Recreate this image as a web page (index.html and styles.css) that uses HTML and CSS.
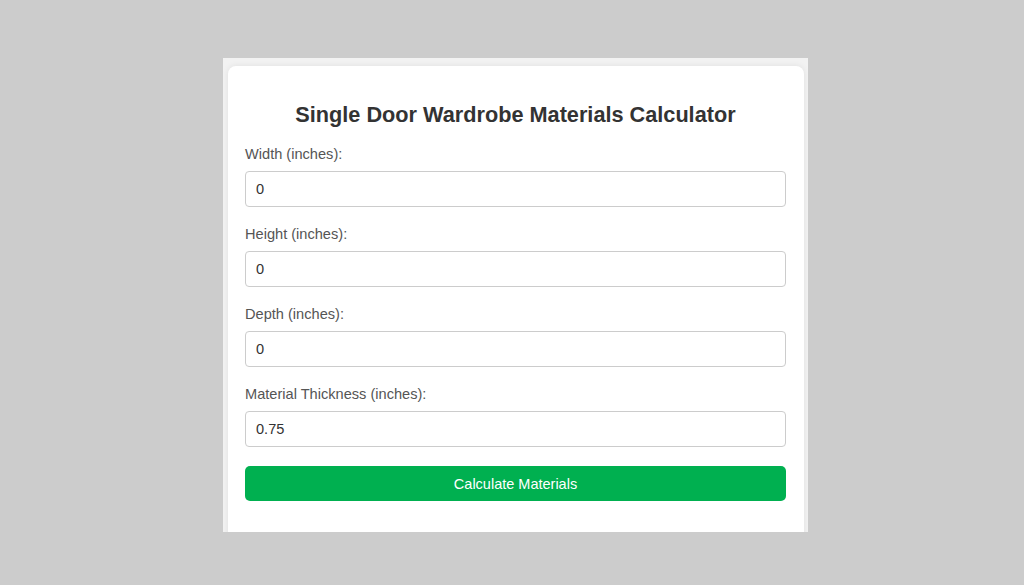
FILE: index.html
```html
<!DOCTYPE html>
<html lang="en">
<head>
    <meta charset="UTF-8">
    <meta name="viewport" content="width=device-width, initial-scale=1.0">
    <title>Single Door Wardrobe Materials Calculator</title>
    <link rel="stylesheet" href="styles.css">
</head>
<body>
    <div class="frame">
        <div class="calculator">
            <h2>Single Door Wardrobe Materials Calculator</h2>
            <div class="field">
                <label for="width">Width (inches):</label>
                <input type="number" id="width" value="0">
            </div>
            <div class="field">
                <label for="height">Height (inches):</label>
                <input type="number" id="height" value="0">
            </div>
            <div class="field">
                <label for="depth">Depth (inches):</label>
                <input type="number" id="depth" value="0">
            </div>
            <div class="field">
                <label for="thickness">Material Thickness (inches):</label>
                <input type="number" id="thickness" value="0.75">
            </div>
            <button class="calc-btn">Calculate Materials</button>
        </div>
    </div>
</body>
</html>
```

FILE: styles.css
```css
* {
    box-sizing: border-box;
}

html,
body {
    margin: 0;
    padding: 0;
}

body {
    background-color: #cccccc;
    font-family: "Liberation Sans", Arial, sans-serif;
}

.frame {
    width: 585px;
    height: 474px;
    margin: 58px 0 0 223px;
    padding: 8px 4px 0 5px;
    background-color: #f2f2f2;
    overflow: hidden;
}

.calculator {
    background-color: #fff;
    border-radius: 8px;
    box-shadow: 0 0 6px rgba(0, 0, 0, 0.08);
    padding: 36px 18px 40px 17px;
}

.calculator h2 {
    margin: 0 0 19px;
    font-size: 21.7px;
    line-height: 25px;
    text-align: center;
    color: #333;
}

.field {
    margin-bottom: 19px;
}

.field label {
    display: block;
    font-size: 14.6px;
    line-height: 16px;
    color: #555;
    margin-bottom: 9px;
}

.field input {
    display: block;
    width: 100%;
    height: 36px;
    padding: 0 10px;
    border: 1px solid #ccc;
    border-radius: 4px;
    font-family: inherit;
    font-size: 14.6px;
    color: #333;
    background: #fff;
    -moz-appearance: textfield;
}

.field input::-webkit-inner-spin-button,
.field input::-webkit-outer-spin-button {
    -webkit-appearance: none;
    margin: 0;
}

.calc-btn {
    display: block;
    width: 100%;
    height: 35px;
    border: none;
    border-radius: 5px;
    background-color: #00b050;
    color: #fff;
    font-family: inherit;
    font-size: 14.5px;
    cursor: pointer;
}
```
